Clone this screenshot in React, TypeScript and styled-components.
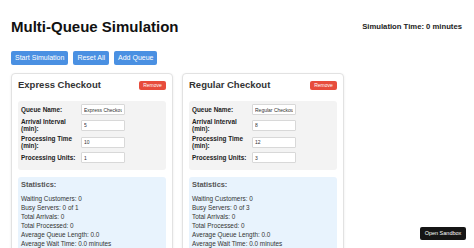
import React from "react";
import styled, { createGlobalStyle } from "styled-components";

const GlobalStyle = createGlobalStyle`
  html, body {
    margin: 0;
    padding: 0;
    overflow: hidden;
    background: #fff;
    font-family: "Liberation Sans", Arial, sans-serif;
    color: #222;
  }
  * {
    box-sizing: border-box;
  }
`;

const Page = styled.div`
  padding: 18px 12px 0 11px;
`;

const Header = styled.header`
  display: flex;
  justify-content: space-between;
  align-items: center;
  height: 17px;
`;

const Title = styled.h1`
  margin: 0;
  font-size: 15px;
  line-height: 17px;
  font-weight: bold;
  color: #111;
`;

const SimTime = styled.div`
  font-size: 7.7px;
  font-weight: bold;
  color: #222;
`;

const Controls = styled.div`
  display: flex;
  gap: 5px;
  margin-top: 16px;
`;

const Button = styled.button`
  height: 14px;
  padding: 0 4px;
  border: none;
  border-radius: 2px;
  background: #4a90e2;
  color: #fff;
  font-family: inherit;
  font-size: 7px;
  line-height: 14px;
  cursor: pointer;
`;

const Queues = styled.div`
  display: flex;
  flex-wrap: wrap;
  gap: 9px;
  margin-top: 8px;
`;

const Card = styled.section`
  width: 162px;
  border: 1px solid #e2e2e2;
  border-radius: 4px;
  padding: 5px 6px;
  background: #fff;
  box-shadow: 0 1px 3px rgba(0, 0, 0, 0.08);
`;

const CardHeader = styled.div`
  display: flex;
  justify-content: space-between;
  align-items: center;
  height: 12px;
  margin-bottom: 10px;
`;

const CardTitle = styled.h2`
  margin: 0;
  font-size: 9.5px;
  line-height: 12px;
  font-weight: bold;
  color: #333;
`;

const RemoveButton = styled.button`
  width: 27px;
  height: 9px;
  padding: 0;
  border: none;
  border-radius: 2px;
  background: #e74c3c;
  color: #fff;
  font-family: inherit;
  font-size: 5px;
  line-height: 9px;
`;

const Config = styled.div`
  display: flex;
  flex-direction: column;
  gap: 3px;
  background: #f3f3f3;
  border-radius: 3px;
  padding: 3px 3px 7px;
`;

const Field = styled.label`
  display: grid;
  grid-template-columns: 60px 44px;
  align-items: center;
`;

const FieldLabel = styled.span`
  font-size: 6.4px;
  line-height: 7px;
  font-weight: bold;
  color: #222;
`;

const Input = styled.input`
  width: 44px;
  height: 11px;
  padding: 0 2px;
  border: 1px solid #d8d8d8;
  border-radius: 1px;
  background: #fff;
  font-family: inherit;
  font-size: 5px;
  color: #333;
  outline: none;
`;

const Stats = styled.div`
  margin-top: 7px;
  background: #e8f3fd;
  border-radius: 3px;
  padding: 3px 3px 6px;
`;

const StatsTitle = styled.h3`
  margin: 0 0 4px;
  font-size: 7.4px;
  line-height: 10px;
  font-weight: bold;
  color: #555;
`;

const StatLine = styled.div`
  font-size: 6.4px;
  line-height: 9px;
  color: #333;
`;

const SandboxButton = styled.button`
  position: fixed;
  right: 8px;
  bottom: 8px;
  width: 46px;
  height: 13px;
  padding: 0;
  border: none;
  border-radius: 2px;
  background: #151515;
  color: #fff;
  font-family: inherit;
  font-size: 5.5px;
  line-height: 13px;
`;

interface QueueCardProps {
  name: string;
  interval: number;
  processing: number;
  units: number;
}

function QueueCard({ name, interval, processing, units }: QueueCardProps) {
  return (
    <Card>
      <CardHeader>
        <CardTitle>{name}</CardTitle>
        <RemoveButton>Remove</RemoveButton>
      </CardHeader>

      <Config>
        <Field>
          <FieldLabel>Queue Name:</FieldLabel>
          <Input defaultValue={name} />
        </Field>
        <Field>
          <FieldLabel>
            Arrival Interval
            <br />
            (min):
          </FieldLabel>
          <Input defaultValue={interval} />
        </Field>
        <Field>
          <FieldLabel>
            Processing Time
            <br />
            (min):
          </FieldLabel>
          <Input defaultValue={processing} />
        </Field>
        <Field>
          <FieldLabel>Processing Units:</FieldLabel>
          <Input defaultValue={units} />
        </Field>
      </Config>

      <Stats>
        <StatsTitle>Statistics:</StatsTitle>
        <StatLine>Waiting Customers: 0</StatLine>
        <StatLine>Busy Servers: 0 of {units}</StatLine>
        <StatLine>Total Arrivals: 0</StatLine>
        <StatLine>Total Processed: 0</StatLine>
        <StatLine>Average Queue Length: 0.0</StatLine>
        <StatLine>Average Wait Time: 0.0 minutes</StatLine>
        <StatLine>Server Utilization: 0.0%</StatLine>
      </Stats>
    </Card>
  );
}

const queues: QueueCardProps[] = [
  { name: "Express Checkout", interval: 5, processing: 10, units: 1 },
  { name: "Regular Checkout", interval: 8, processing: 12, units: 3 },
];

function App() {
  return (
    <Page>
      <GlobalStyle />
      <Header>
        <Title>Multi-Queue Simulation</Title>
        <SimTime>Simulation Time: 0 minutes</SimTime>
      </Header>

      <Controls>
        <Button>Start Simulation</Button>
        <Button>Reset All</Button>
        <Button>Add Queue</Button>
      </Controls>

      <Queues>
        {queues.map((q) => (
          <QueueCard key={q.name} {...q} />
        ))}
      </Queues>

      <SandboxButton>Open Sandbox</SandboxButton>
    </Page>
  );
}

export default App;
